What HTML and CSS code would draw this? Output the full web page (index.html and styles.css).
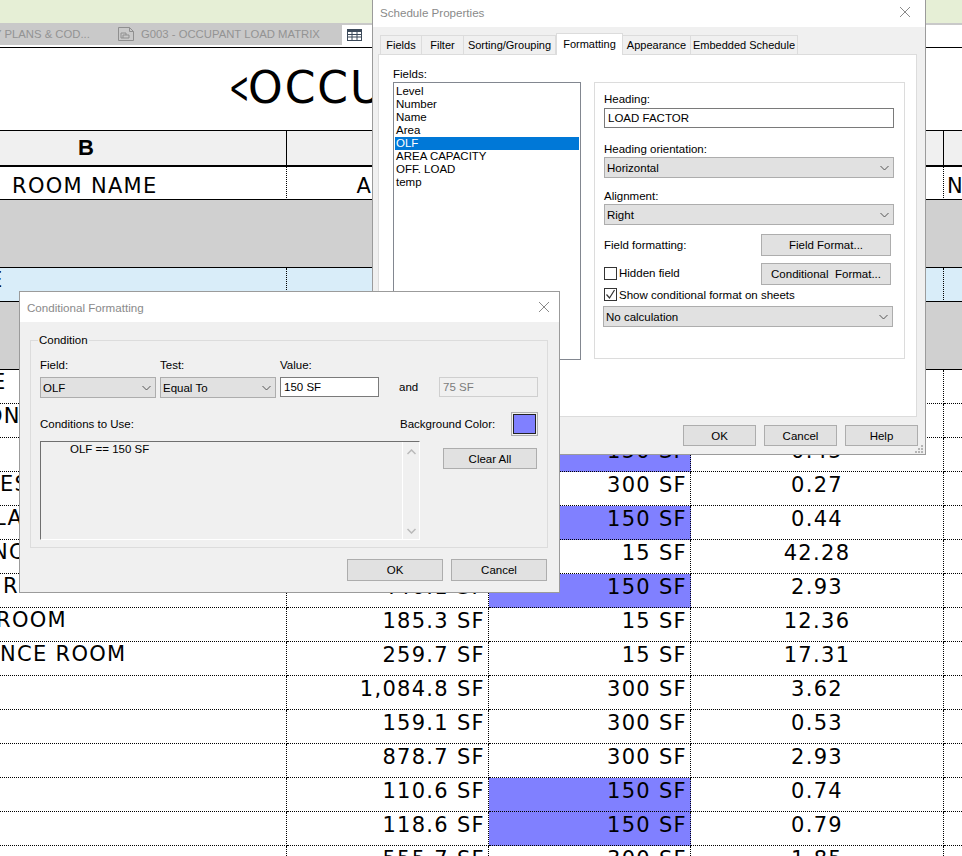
FILE: index.html
```html
<!DOCTYPE html>
<html lang="en">
<head>
    <meta charset="UTF-8">
    <title>Schedule Properties</title>
    <link rel="stylesheet" href="styles.css">
</head>
<body>
    <div class="ribbon"></div>
    <div class="tabbar">
        <div class="doc-tab doc-tab-first">Y PLANS &amp; COD...</div>
        <div class="doc-tab doc-tab-second">
            <svg class="doc-icon" width="16" height="14" viewBox="0 0 16 14"><path d="M.5.5h11l4 4v9H.5zM11.5.5v4h4M3 11V6h5v2h3v3zM5 11V8h3" fill="none" stroke="#8f8f8f"/></svg>
            G003 - OCCUPANT LOAD MATRIX
        </div>
        <div class="doc-tab doc-tab-active">
            <svg class="doc-icon" width="15" height="12" viewBox="0 0 15 12"><path d="M0 0h15v12H0z" fill="#3c4a5a"/><path d="M1 3h13v8H1z" fill="#fff"/><path d="M1 5.5h13M1 8h13M5 3v8M10 3v8" stroke="#3c4a5a"/></svg>
        </div>
    </div>
    <div class="white-gap"></div>

    <div class="sheet-title"><span class="title-angle">&lt;</span>OCCUPANT LOAD&gt;</div>

    <div class="schedule">
        <div class="row row-letters">
            <div class="cell letter letter-b">B</div>
            <div class="cell letter">C</div>
            <div class="cell letter">D</div>
            <div class="cell letter">E</div>
            <div class="cell letter"></div>
        </div>
        <div class="row row-heads">
            <div class="cell head head-b">ROOM NAME</div>
            <div class="cell head">AREA</div>
            <div class="cell head">LOAD FACTOR</div>
            <div class="cell head">OFF. LOAD</div>
            <div class="cell head head-f">N</div>
        </div>
        <div class="group-band band-short"></div>
        <div class="row row-blue">
            <div class="cell name indent-blue">E</div>
            <div class="cell"></div><div class="cell"></div><div class="cell"></div><div class="cell"></div>
        </div>
        <div class="group-band band-mid"></div>

        <div class="row"><div class="cell name indent-e">E</div><div class="cell num">66.0 SF</div><div class="cell num">15 SF</div><div class="cell mid">4.40</div><div class="cell"></div></div>
        <div class="row"><div class="cell name indent-on">ON</div><div class="cell num">120.0 SF</div><div class="cell num">300 SF</div><div class="cell mid">0.40</div><div class="cell"></div></div>
        <div class="row"><div class="cell name"></div><div class="cell num">67.5 SF</div><div class="cell num hot">150 SF</div><div class="cell mid">0.45</div><div class="cell"></div></div>
        <div class="row"><div class="cell name">ES</div><div class="cell num">81.0 SF</div><div class="cell num">300 SF</div><div class="cell mid">0.27</div><div class="cell"></div></div>
        <div class="row"><div class="cell name indent-la">LA</div><div class="cell num">66.0 SF</div><div class="cell num hot">150 SF</div><div class="cell mid">0.44</div><div class="cell"></div></div>
        <div class="row"><div class="cell name indent-nc">NC</div><div class="cell num">634.2 SF</div><div class="cell num">15 SF</div><div class="cell mid">42.28</div><div class="cell"></div></div>
        <div class="row"><div class="cell name indent-r">R</div><div class="cell num">440.1 SF</div><div class="cell num hot">150 SF</div><div class="cell mid">2.93</div><div class="cell"></div></div>
        <div class="row"><div class="cell name indent-room">ROOM</div><div class="cell num">185.3 SF</div><div class="cell num">15 SF</div><div class="cell mid">12.36</div><div class="cell"></div></div>
        <div class="row"><div class="cell name">NCE ROOM</div><div class="cell num">259.7 SF</div><div class="cell num">15 SF</div><div class="cell mid">17.31</div><div class="cell"></div></div>
        <div class="row"><div class="cell name"></div><div class="cell num">1,084.8 SF</div><div class="cell num">300 SF</div><div class="cell mid">3.62</div><div class="cell"></div></div>
        <div class="row"><div class="cell name"></div><div class="cell num">159.1 SF</div><div class="cell num">300 SF</div><div class="cell mid">0.53</div><div class="cell"></div></div>
        <div class="row"><div class="cell name"></div><div class="cell num">878.7 SF</div><div class="cell num">300 SF</div><div class="cell mid">2.93</div><div class="cell"></div></div>
        <div class="row"><div class="cell name"></div><div class="cell num">110.6 SF</div><div class="cell num hot">150 SF</div><div class="cell mid">0.74</div><div class="cell"></div></div>
        <div class="row"><div class="cell name"></div><div class="cell num">118.6 SF</div><div class="cell num hot">150 SF</div><div class="cell mid">0.79</div><div class="cell"></div></div>
        <div class="row"><div class="cell name"></div><div class="cell num">555.7 SF</div><div class="cell num">300 SF</div><div class="cell mid">1.85</div><div class="cell"></div></div>
    </div>

    <!-- Schedule Properties window -->
    <div class="dialog dialog-props">
        <div class="titlebar">
            <span>Schedule Properties</span>
            <svg class="close" width="12" height="12" viewBox="0 0 12 12"><path d="M1 1l10 10M11 1L1 11" stroke="#8a8a8a" fill="none"/></svg>
        </div>
        <div class="dialog-body">
            <div class="tabs">
                <div class="tab tab-fields">Fields</div>
                <div class="tab tab-filter">Filter</div>
                <div class="tab tab-sort">Sorting/Grouping</div>
                <div class="tab tab-format active">Formatting</div>
                <div class="tab tab-appear">Appearance</div>
                <div class="tab tab-embed">Embedded Schedule</div>
            </div>
            <div class="tab-panel">
                <div class="fields-col">
                    <div class="label">Fields:</div>
                    <div class="listbox">
                        <div class="list-item">Level</div>
                        <div class="list-item">Number</div>
                        <div class="list-item">Name</div>
                        <div class="list-item">Area</div>
                        <div class="list-item selected">OLF</div>
                        <div class="list-item">AREA CAPACITY</div>
                        <div class="list-item">OFF. LOAD</div>
                        <div class="list-item">temp</div>
                    </div>
                </div>
                <div class="format-box">
                    <div class="label">Heading:</div>
                    <div class="input input-heading">LOAD FACTOR</div>
                    <div class="label label-orient">Heading orientation:</div>
                    <div class="select select-wide">Horizontal<svg class="chev" width="9" height="6" viewBox="0 0 9 6"><path d="M.5 1l4 4 4-4" fill="none" stroke="#555"/></svg></div>
                    <div class="label label-align">Alignment:</div>
                    <div class="select select-wide">Right<svg class="chev" width="9" height="6" viewBox="0 0 9 6"><path d="M.5 1l4 4 4-4" fill="none" stroke="#555"/></svg></div>
                    <div class="format-row format-row-first">
                        <span>Field formatting:</span>
                        <div class="btn btn-format">Field Format...</div>
                    </div>
                    <div class="format-row format-row-second">
                        <label class="check-line"><span class="check"></span>Hidden field</label>
                        <div class="btn btn-format">Conditional&nbsp; Format...</div>
                    </div>
                    <label class="check-line check-line-show">
                        <span class="check"><svg width="11" height="11" viewBox="0 0 11 11"><path d="M1.5 5.5l3 3.5 5-8" fill="none" stroke="#333" stroke-width="1.2"/></svg></span>Show conditional format on sheets
                    </label>
                    <div class="select select-calc">No calculation<svg class="chev" width="9" height="6" viewBox="0 0 9 6"><path d="M.5 1l4 4 4-4" fill="none" stroke="#555"/></svg></div>
                </div>
            </div>
            <div class="footer footer-props">
                <div class="btn btn-foot">OK</div>
                <div class="btn btn-foot">Cancel</div>
                <div class="btn btn-foot">Help</div>
            </div>
            <svg class="grip" width="9" height="8" viewBox="0 0 9 8"><path d="M6 0h2v2H6zM3 3h2v2H3zM6 3h2v2H6zM0 6h2v2H0zM3 6h2v2H3zM6 6h2v2H6z" fill="#b5b5b5"/></svg>
        </div>
    </div>

    <!-- Conditional Formatting window -->
    <div class="dialog dialog-cond">
        <div class="titlebar titlebar-cond">
            <span>Conditional Formatting</span>
            <svg class="close" width="12" height="12" viewBox="0 0 12 12"><path d="M1 1l10 10M11 1L1 11" stroke="#8a8a8a" fill="none"/></svg>
        </div>
        <div class="dialog-body">
            <div class="condition-box">
                <div class="legend">Condition</div>
                <div class="cond-labels">
                    <span class="col-field">Field:</span>
                    <span class="col-test">Test:</span>
                    <span>Value:</span>
                </div>
                <div class="cond-controls">
                    <div class="select select-small">OLF<svg class="chev" width="9" height="6" viewBox="0 0 9 6"><path d="M.5 1l4 4 4-4" fill="none" stroke="#555"/></svg></div>
                    <div class="select select-small">Equal To<svg class="chev" width="9" height="6" viewBox="0 0 9 6"><path d="M.5 1l4 4 4-4" fill="none" stroke="#555"/></svg></div>
                    <div class="input input-value">150 SF</div>
                    <span class="and">and</span>
                    <div class="input input-value input-off">75 SF</div>
                </div>
                <div class="cond-mid">
                    <span class="uses-label">Conditions to Use:</span>
                    <span class="color-label">Background Color:</span>
                    <div class="swatch"><div class="swatch-fill"></div></div>
                </div>
                <div class="cond-list-row">
                    <div class="cond-list">
                        <div class="cond-text">OLF == 150 SF</div>
                        <div class="scroll">
                            <svg width="9" height="6" viewBox="0 0 9 6"><path d="M.5 5l4-4 4 4" fill="none" stroke="#b9b9b9" stroke-width="1.5"/></svg>
                            <svg width="9" height="6" viewBox="0 0 9 6"><path d="M.5 1l4 4 4-4" fill="none" stroke="#b9b9b9" stroke-width="1.5"/></svg>
                        </div>
                    </div>
                    <div class="btn btn-clear">Clear All</div>
                </div>
            </div>
            <div class="footer footer-cond">
                <div class="btn btn-cond">OK</div>
                <div class="btn btn-cond">Cancel</div>
            </div>
        </div>
    </div>
</body>
</html>
```

FILE: styles.css
```css
/* General styles */
html, body {
    margin: 0;
    padding: 0;
    height: 856px;
    overflow: hidden;
    background-color: #fff;
}

body {
    position: relative;
    font-family: "DejaVu Sans", sans-serif;
    color: #000;
}

/* Top of the application window */
.ribbon {
    height: 23px;
    background-color: #e6efd6;
}

.tabbar {
    display: flex;
    height: 22px;
    background-color: #c9c9c9;
    font-family: "Liberation Sans", sans-serif;
    font-size: 11.3px;
    color: #939393;
}

.doc-tab {
    display: flex;
    align-items: center;
    white-space: nowrap;
}

.doc-tab-first {
    width: 118px;
    text-indent: -6px;
}

.doc-tab-second {
    width: 224px;
}

.doc-icon {
    margin-right: 7px;
}

.doc-tab-active {
    flex: 1;
    margin-top: 2px;
    padding-left: 5px;
    background-color: #fff;
}

.white-gap {
    height: 2px;
}

.sheet-title {
    height: 82px;
    padding-left: 229px;
    border-top: 1px solid #000;
    font-size: 44px;
    line-height: 80px;
    letter-spacing: 2px;
    white-space: nowrap;
    overflow: hidden;
}

.title-angle {
    display: inline-block;
    width: 19px;
    transform: scaleX(.55);
    transform-origin: left center;
}

/* Schedule table */
.schedule {
    border-top: 1px solid #000;
}

.row {
    display: grid;
    grid-template-columns: 287px 202px 202px 253px 1fr;
    height: 34px;
}

.cell {
    display: flex;
    align-items: center;
    min-width: 0;
    box-sizing: border-box;
    padding-bottom: 7px;
    border-right: 1px dotted #000;
    border-bottom: 1px dotted #000;
    font-size: 21px;
    letter-spacing: 1.3px;
    white-space: nowrap;
    overflow: hidden;
}

.cell:last-child {
    border-right: none;
}

.row-letters {
    height: 36px;
}

.row-letters .cell {
    justify-content: center;
    padding-bottom: 0;
    background-color: #f0f0f0;
    border-right: 1px solid #000;
    border-bottom: 2px solid #000;
    font-family: "Liberation Sans", sans-serif;
    font-size: 22px;
    font-weight: bold;
    letter-spacing: 0;
}

.row-letters .letter-b {
    justify-content: flex-end;
    padding-right: 192px;
}

.row-letters .cell:last-child {
    border-right: none;
}

.row-heads {
    height: 33px;
}

.row-heads .cell {
    justify-content: center;
    padding-top: 5px;
    padding-bottom: 0;
    border-bottom: 1px solid #000;
}

.row-heads .head-b {
    justify-content: flex-start;
    padding-left: 12px;
}

.row-heads .head-f {
    justify-content: flex-start;
    padding-left: 3px;
}

.group-band {
    box-sizing: border-box;
    background-color: #d0d0d0;
    border-bottom: 1px solid #000;
}

.band-short {
    height: 68px;
}

.band-mid {
    height: 68px;
}

.row-blue .cell {
    background-color: #d9edf9;
    border-bottom: 1px solid #000;
}

.num {
    justify-content: flex-end;
    padding-right: 3px;
}

.mid {
    justify-content: center;
}

.hot {
    background-color: #8080ff;
}

.name {
    display: block;
    line-height: 25px;
}

.indent-blue { text-indent: -11px; }
.indent-e { text-indent: -8px; }
.indent-on { text-indent: -14px; }
.indent-la { text-indent: -6px; }
.indent-nc { text-indent: -8px; }
.indent-r { text-indent: 3px; }
.indent-room { text-indent: -4px; }

/* Dialog windows */
.dialog {
    position: absolute;
    box-sizing: border-box;
    border: 1px solid #9b9b9b;
    background-color: #f0f0f0;
    font-family: "Liberation Sans", sans-serif;
    font-size: 11.5px;
    display: flex;
    flex-direction: column;
}

.dialog-props {
    left: 372px;
    top: -1px;
    width: 554px;
    height: 456px;
}

.dialog-cond {
    left: 19px;
    top: 291px;
    width: 541px;
    height: 302px;
}

.titlebar {
    box-sizing: border-box;
    display: flex;
    align-items: center;
    justify-content: space-between;
    height: 27px;
    flex: none;
    padding: 0 14px 3px 7px;
    background-color: #fff;
    color: #8a8a8a;
    font-size: 11.6px;
}

.titlebar-cond {
    height: 30px;
    padding: 0 9px 0 7px;
}

.dialog-body {
    position: relative;
    flex: 1;
}

/* Tabs */
.tabs {
    display: flex;
    align-items: flex-end;
    height: 27px;
    padding-left: 7px;
    font-size: 11px;
}

.tab {
    box-sizing: border-box;
    height: 19px;
    padding-top: 3px;
    text-align: center;
    white-space: nowrap;
    background-color: #f0f0f0;
    border: 1px solid #dcdcdc;
    border-bottom: none;
    border-left: none;
}

.tab-fields { width: 42px; border-left: 1px solid #dcdcdc; }
.tab-filter { width: 42px; }
.tab-sort { width: 92px; }
.tab-format {
    width: 67px;
    height: 22px;
    margin-bottom: -1px;
    padding-top: 4px;
    background-color: #fff;
    border-left: 1px solid #dcdcdc;
    position: relative;
}
.tab-appear { width: 68px; }
.tab-embed { width: 107px; }

.tab-panel {
    display: flex;
    box-sizing: border-box;
    width: 539px;
    height: 363px;
    margin-left: 5px;
    padding: 12px 0 0 14px;
    background-color: #fff;
    border: 1px solid #dcdcdc;
}

.fields-col {
    width: 188px;
}

.label {
    height: 14px;
    line-height: 14px;
}

.listbox {
    box-sizing: border-box;
    height: 278px;
    margin-top: 1px;
    padding: 2px 1px;
    border: 1px solid #828790;
}

.list-item {
    height: 13px;
    line-height: 13px;
    padding-left: 1px;
}

.selected {
    background-color: #0078d7;
    color: #fff;
}

.format-box {
    box-sizing: border-box;
    width: 311px;
    height: 277px;
    margin: 15px 0 0 13px;
    padding: 9px 0 0 9px;
    border: 1px solid #dcdcdc;
}

.input {
    box-sizing: border-box;
    display: flex;
    align-items: center;
    height: 20px;
    padding-left: 3px;
    background-color: #fff;
    border: 1px solid #7a7a7a;
}

.input-heading {
    width: 290px;
    margin-top: 2px;
}

.label-orient {
    margin-top: 14px;
}

.label-align {
    margin-top: 11px;
}

.select {
    position: relative;
    box-sizing: border-box;
    display: flex;
    align-items: center;
    height: 21px;
    padding-left: 2px;
    background-color: #e1e1e1;
    border: 1px solid #adadad;
}

.select-wide {
    width: 290px;
    margin-top: 1px;
}

.chev {
    position: absolute;
    right: 4px;
    top: 7px;
}

.format-row {
    display: flex;
    align-items: center;
    justify-content: space-between;
    width: 287px;
}

.format-row-first {
    margin-top: 9px;
}

.format-row-second {
    margin-top: 7px;
}

.btn {
    box-sizing: border-box;
    display: flex;
    align-items: center;
    justify-content: center;
    background-color: #e1e1e1;
    border: 1px solid #adadad;
    white-space: nowrap;
}

.btn-format {
    width: 130px;
    height: 22px;
}

.check-line {
    display: flex;
    align-items: center;
    height: 13px;
}

.format-row-second .check-line {
    margin-top: -2px;
}

.check-line-show {
    margin-top: 3px;
}

.check {
    box-sizing: border-box;
    display: block;
    width: 13px;
    height: 13px;
    margin-right: 2px;
    background-color: #fff;
    border: 1px solid #333;
}

.check svg {
    display: block;
}

.select-calc {
    width: 290px;
    margin: 5px 0 0 -1px;
}

.footer {
    display: flex;
    justify-content: flex-end;
    gap: 8px;
}

.footer-props {
    padding: 8px 7px 0 0;
}

.btn-foot {
    width: 73px;
    height: 21px;
}

.grip {
    position: absolute;
    right: 1px;
    bottom: 1px;
}

/* Conditional formatting */
.condition-box {
    position: relative;
    box-sizing: border-box;
    width: 518px;
    height: 208px;
    margin: 18px 0 0 10px;
    padding: 17px 0 0 9px;
    border: 1px solid #dcdcdc;
}

.legend {
    position: absolute;
    left: 7px;
    top: -7px;
    padding: 0 1px;
    background-color: #f0f0f0;
    line-height: 13px;
}

.cond-labels {
    display: flex;
    height: 14px;
    line-height: 14px;
}

.col-field,
.col-test {
    width: 120px;
}

.cond-controls {
    display: flex;
    align-items: flex-start;
    gap: 4px;
    margin-top: 5px;
}

.select-small {
    width: 116px;
}

.input-value {
    width: 99px;
}

.and {
    width: 40px;
    margin-left: 16px;
    line-height: 21px;
}

.input-off {
    background-color: #f0f0f0;
    border-color: #cfcfcf;
    color: #7c7c7c;
    margin-left: -4px;
}

.cond-mid {
    display: flex;
    align-items: center;
    height: 24px;
    margin-top: 14px;
    line-height: 20px;
}

.uses-label {
    width: 360px;
}

.color-label {
    width: 111px;
}

.swatch {
    box-sizing: border-box;
    width: 27px;
    height: 24px;
    padding: 1px;
    border: 1px solid #adadad;
}

.swatch-fill {
    box-sizing: border-box;
    height: 100%;
    background-color: #8080ff;
    border: 1px solid #222;
}

.cond-list-row {
    display: flex;
    align-items: flex-start;
    margin-top: 5px;
}

.cond-list {
    box-sizing: border-box;
    display: flex;
    justify-content: space-between;
    width: 380px;
    height: 99px;
    border: 1px solid;
    border-color: #6f6f6f #fff #fff #6f6f6f;
}

.cond-text {
    padding: 1px 0 0 29px;
}

.scroll {
    display: flex;
    flex-direction: column;
    align-items: center;
    justify-content: space-between;
    box-sizing: border-box;
    width: 17px;
    padding: 7px 0 5px;
    border-left: 1px solid #fff;
}

.scroll svg {
    display: block;
}

.btn-clear {
    width: 94px;
    height: 21px;
    margin: 7px 0 0 23px;
}

.footer-cond {
    padding: 11px 12px 0 0;
}

.btn-cond {
    width: 96px;
    height: 22px;
}
```
